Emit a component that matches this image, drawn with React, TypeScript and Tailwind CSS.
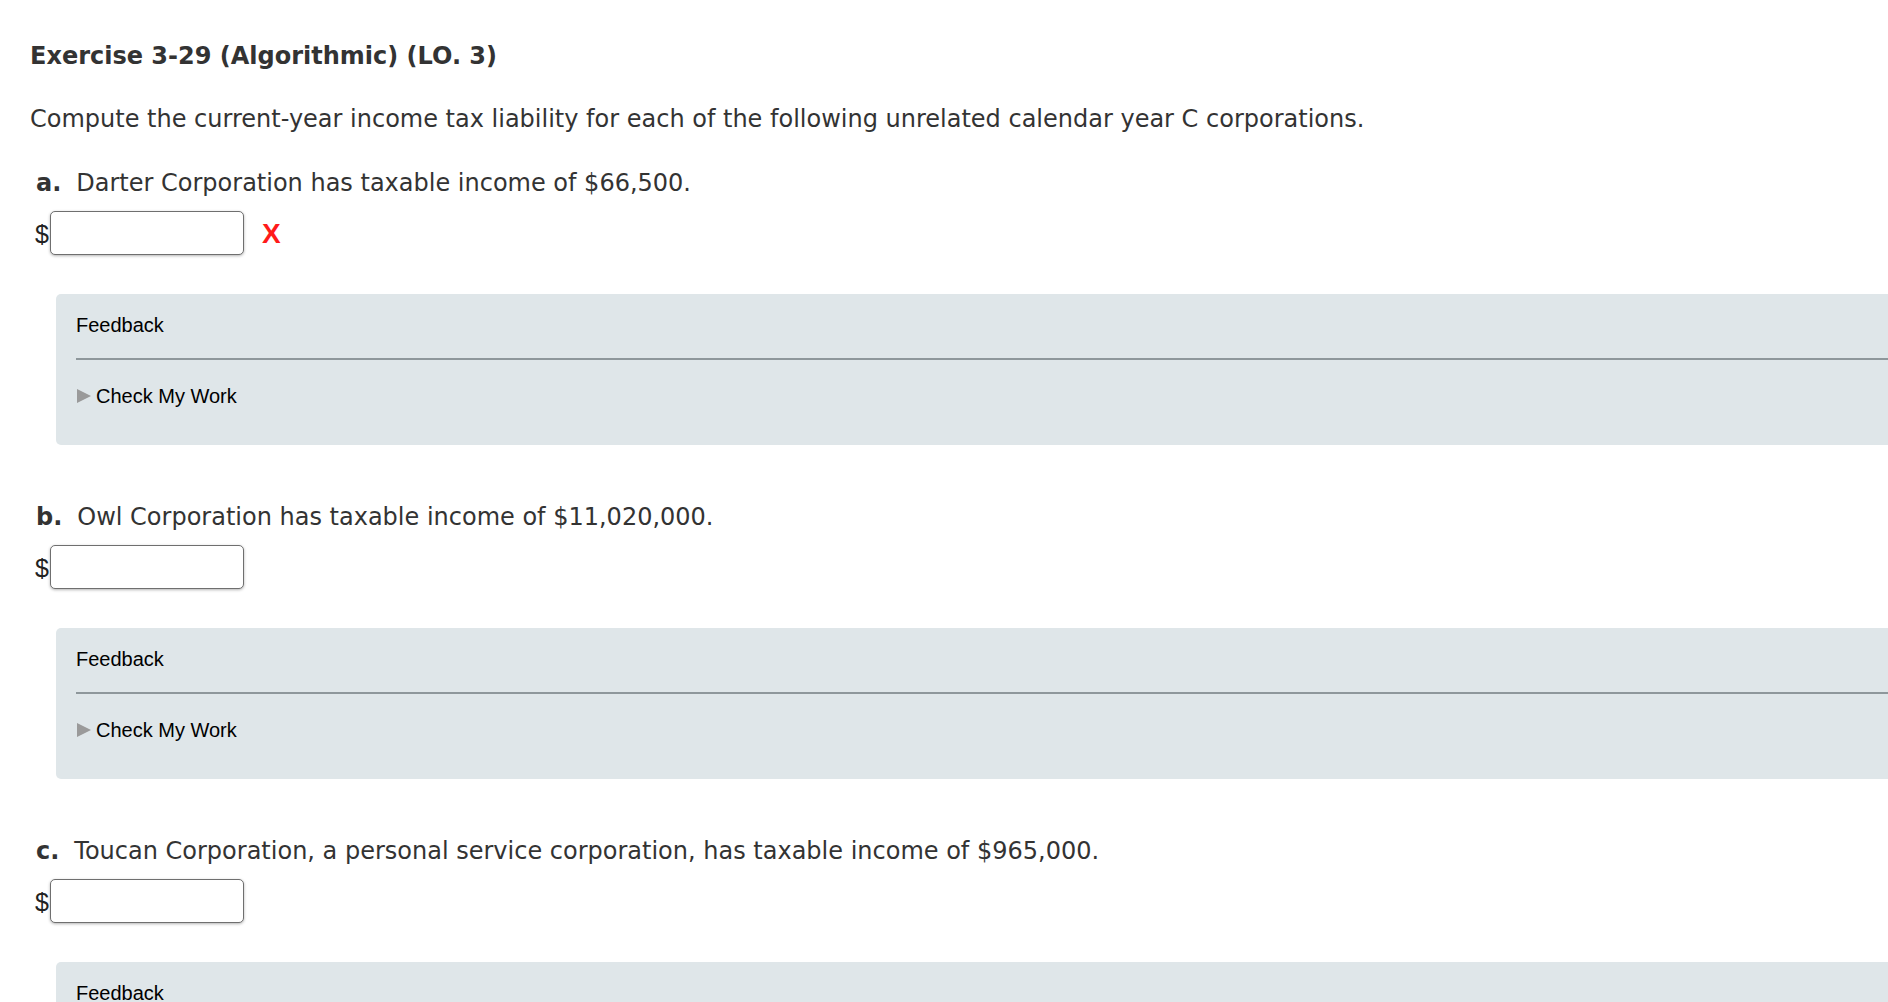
const questions = [
  { label: 'a.', text: 'Darter Corporation has taxable income of $66,500.', wrong: true },
  { label: 'b.', text: 'Owl Corporation has taxable income of $11,020,000.', wrong: false },
  { label: 'c.', text: 'Toucan Corporation, a personal service corporation, has taxable income of $965,000.', wrong: false },
]

function FeedbackBox() {
  return (
    <div className="ml-[26px] mt-[39px] w-[1900px] rounded-[5px] bg-[#dfe6e9] pt-[19px] pb-[37px] pl-[20px] font-['Liberation_Sans',Arial,sans-serif] text-[20px] text-black">
      <div className="leading-[24px]">Feedback</div>
      <div className="mt-[21px] h-[2px] bg-[#8e979b]" />
      <div className="mt-[24px] flex items-center leading-[24px]">
        <span className="mr-[5px] ml-[1px] h-0 w-0 border-y-[7px] border-l-[14px] border-y-transparent border-l-[#9a9a9a] blur-[0.5px]" />
        <span>Check My Work</span>
      </div>
    </div>
  )
}

export default function App() {
  return (
    <div className="min-h-screen w-full overflow-hidden bg-white px-[30px] pt-[41px] font-['DejaVu_Sans',Verdana,sans-serif] text-[24px] text-[#333]">
      <h1 className="text-[24px] font-bold leading-[30px]">Exercise 3-29 (Algorithmic) (LO. 3)</h1>
      <p className="mt-[33px] leading-[30px]">
        Compute the current-year income tax liability for each of the following unrelated calendar year C corporations.
      </p>

      {questions.map((q, i) => (
        <div key={q.label} className={i === 0 ? 'mt-[34px]' : 'mt-[57px]'}>
          <p className="leading-[30px]">
            <span className="ml-[6px] mr-[15px] font-bold">{q.label}</span>
            {q.text}
          </p>
          <div className="mt-[13px] flex items-center">
            <span className="ml-[5px] mr-[1px] mt-[3px] font-['Liberation_Sans',Arial,sans-serif] text-[25px] leading-none text-[#222]">$</span>
            <input
              type="text"
              className="h-[44px] w-[194px] rounded-[5px] border-[1.5px] border-[#6f6f6f] bg-white shadow-[0_1px_3px_rgba(0,0,0,0.3)] outline-none"
            />
            {q.wrong && (
              <span className="ml-[18px] mt-[1px] font-['Liberation_Sans',Arial,sans-serif] text-[28px] font-bold leading-none text-[#ff1a1a]">
                X
              </span>
            )}
          </div>
          <FeedbackBox />
        </div>
      ))}
    </div>
  )
}
